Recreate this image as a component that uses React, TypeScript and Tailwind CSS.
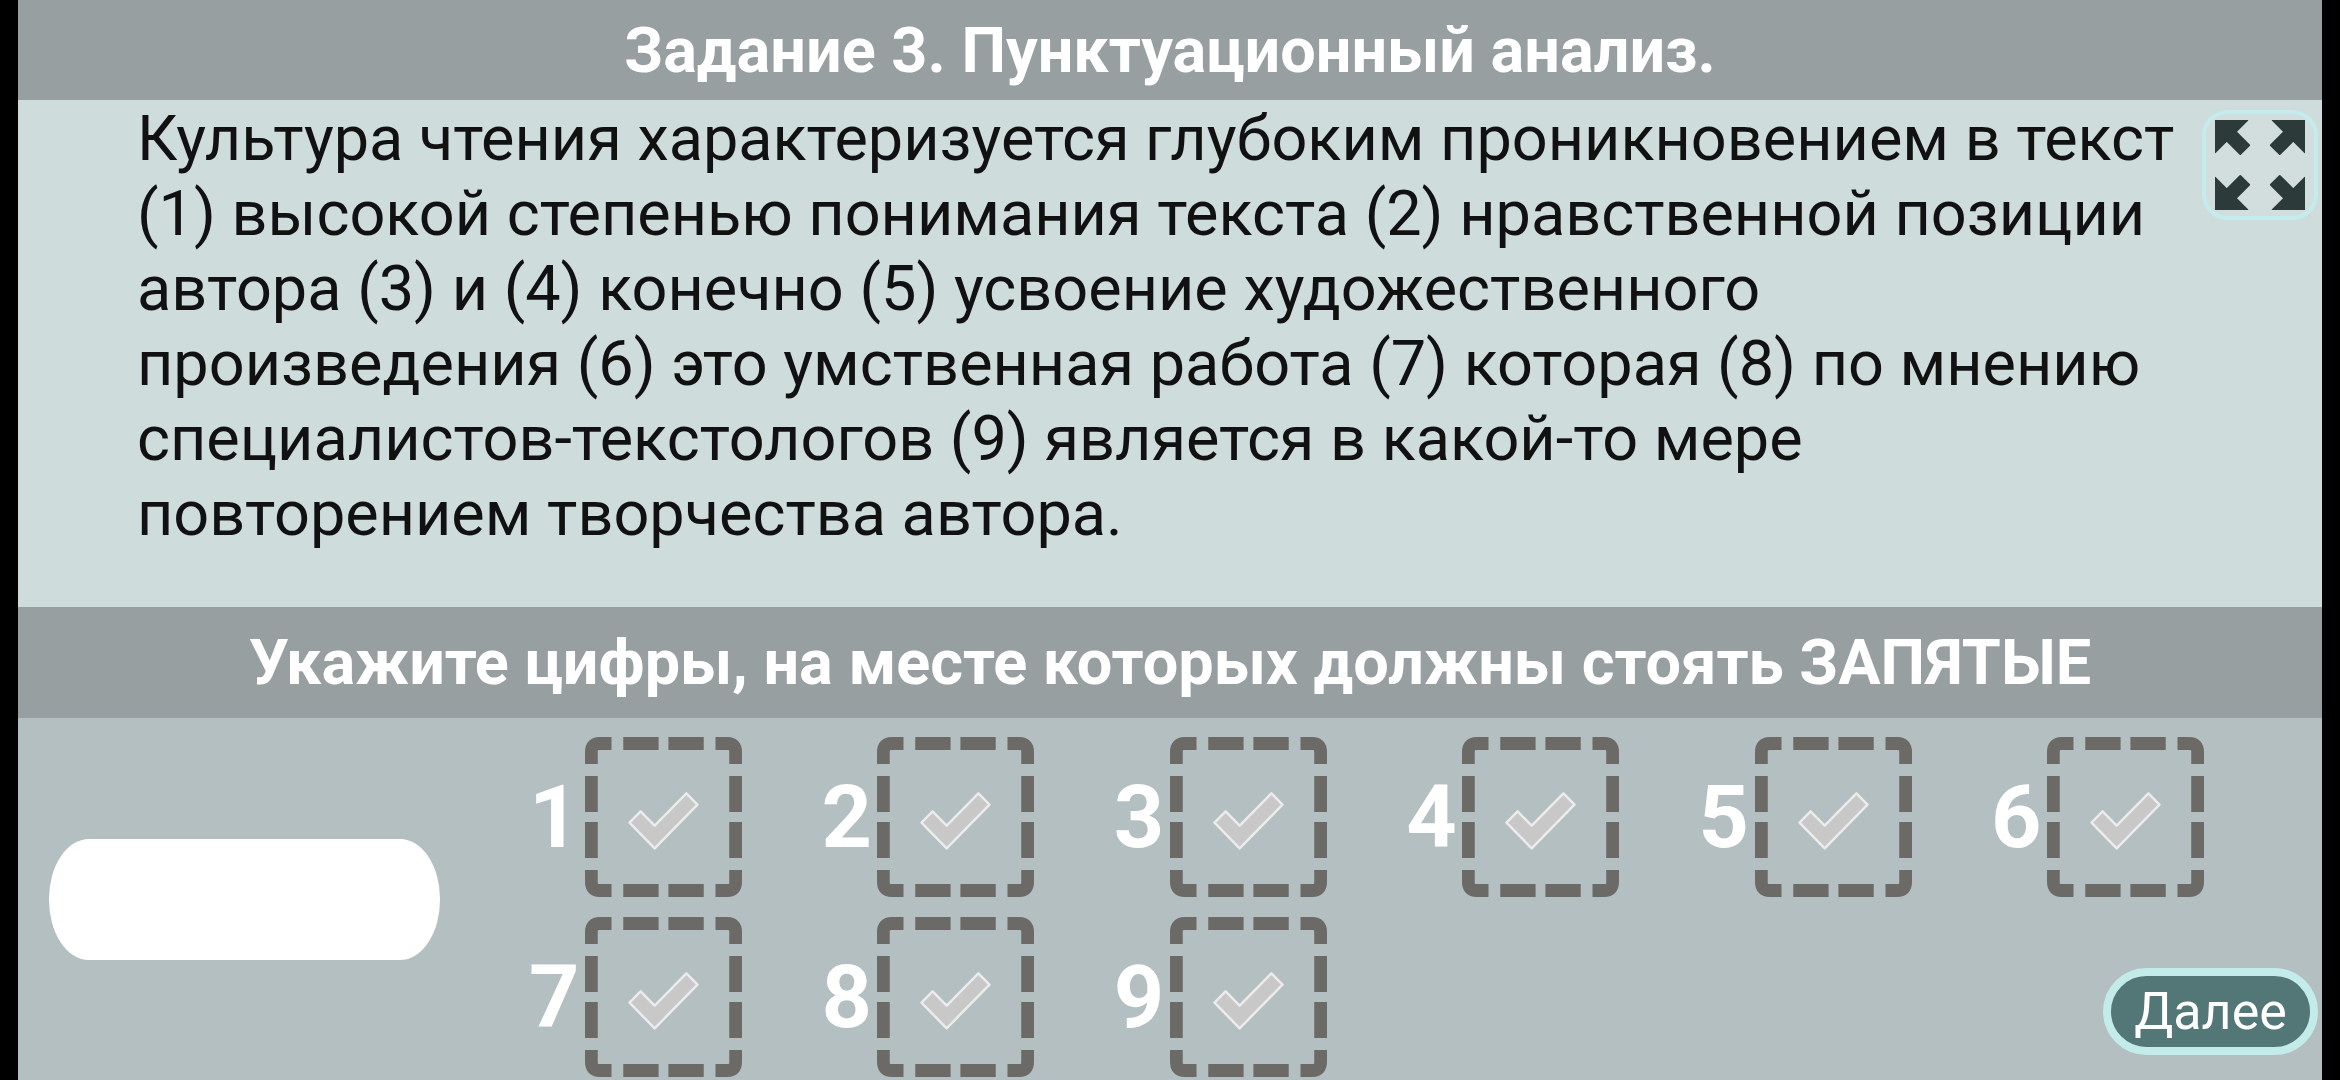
import React from "react";

function DashedBox() {
  const paths = [
    "M6.5 27 V15 Q6.5 6.5 15 6.5 H27",
    "M39 6.5 H75",
    "M85 6.5 H121",
    "M133 6.5 H145 Q153.5 6.5 153.5 15 V27",
    "M153.5 39 V75",
    "M153.5 85 V121",
    "M153.5 133 V145 Q153.5 153.5 145 153.5 H133",
    "M121 153.5 H85",
    "M75 153.5 H39",
    "M27 153.5 H15 Q6.5 153.5 6.5 145 V133",
    "M6.5 121 V85",
    "M6.5 75 V39",
  ];
  return (
    <svg width="157" height="160" viewBox="0 0 160 160" preserveAspectRatio="none" className="shrink-0">
      {paths.map((d, i) => (
        <path key={i} d={d} fill="none" stroke="#6b6a66" strokeWidth="13" />
      ))}
      <g transform="translate(43 50)">
        <polygon
          points="2.34,35.66 28,61.3 71.66,17.66 60.34,6.34 28,38.7 13.66,24.34"
          fill="#c8c8c8"
          stroke="#ececec"
          strokeWidth="2.5"
          strokeLinejoin="round"
        />
      </g>
    </svg>
  );
}

function ExpandIcon() {
  const arrow = "0,0 36,0 22.95,13.05 37.95,28.05 28.05,37.95 13.05,22.95 0,36";
  return (
    <svg width="90" height="90" viewBox="0 0 100 100">
      <g fill="#2c3a3a" stroke="#2c3a3a" strokeWidth="2" strokeLinejoin="round">
        <polygon points={arrow} />
        <polygon points={arrow} transform="translate(100 0) scale(-1 1)" />
        <polygon points={arrow} transform="translate(0 100) scale(1 -1)" />
        <polygon points={arrow} transform="translate(100 100) scale(-1 -1)" />
      </g>
    </svg>
  );
}

const lines = [
  "Культура чтения характеризуется глубоким проникновением в текст",
  "(1) высокой степенью понимания текста (2) нравственной позиции",
  "автора (3) и (4) конечно (5) усвоение художественного",
  "произведения (6) это умственная работа (7) которая (8) по мнению",
  "специалистов-текстологов (9) является в какой-то мере",
  "повторением творчества автора.",
];

export default function App() {
  const nums = [1, 2, 3, 4, 5, 6, 7, 8, 9];
  return (
    <div className="w-[2340px] h-[1080px] bg-black flex px-[18px] overflow-hidden font-[Roboto,sans-serif]">
      <div className="flex-1 flex flex-col">
        <div className="h-[100px] bg-[#979fa0] flex items-center justify-center text-white font-bold text-[63px] leading-none">
          Задание 3. Пунктуационный анализ.
        </div>
        <div className="h-[507px] bg-[#cfdcdc] flex">
          <div className="flex-1 pl-[119px] pt-[1px] text-[63px] leading-[75px] text-[#111]">
            {lines.map((l, i) => (
              <div key={i} className="whitespace-nowrap">
                {l}
              </div>
            ))}
          </div>
          <div className="mt-[10px] mr-[4px] w-[116px] h-[110px] rounded-[26px] border-[4px] border-[#c4ecec] bg-[#d2dddd] flex items-center justify-center">
            <ExpandIcon />
          </div>
        </div>
        <div className="h-[111px] bg-[#979fa0] flex items-center justify-center text-white font-bold text-[63px] leading-none">
          Укажите цифры, на месте которых должны стоять ЗАПЯТЫЕ
        </div>
        <div className="flex-1 relative bg-[#b3bfc0] flex items-start">
          <div className="self-center ml-[31px] w-[391px] h-[121px] bg-white rounded-[40px_/_60px]" />
          <div className="ml-[89px] pt-[19px] grid grid-cols-[repeat(6,292.4px)] gap-y-[20px]">
            {nums.map((n) => (
              <div key={n} className="flex items-center">
                <span className="w-[48px] text-right text-white font-bold text-[88px] leading-none">{n}</span>
                <span className="ml-[8px]">
                  <DashedBox />
                </span>
              </div>
            ))}
          </div>
          <div className="absolute right-[4px] bottom-[25px] w-[215px] h-[87px] rounded-full border-[8px] border-[#c3ebea] bg-[#537676] text-white text-[52px] leading-none flex items-center justify-center">
            Далее
          </div>
        </div>
      </div>
    </div>
  );
}
